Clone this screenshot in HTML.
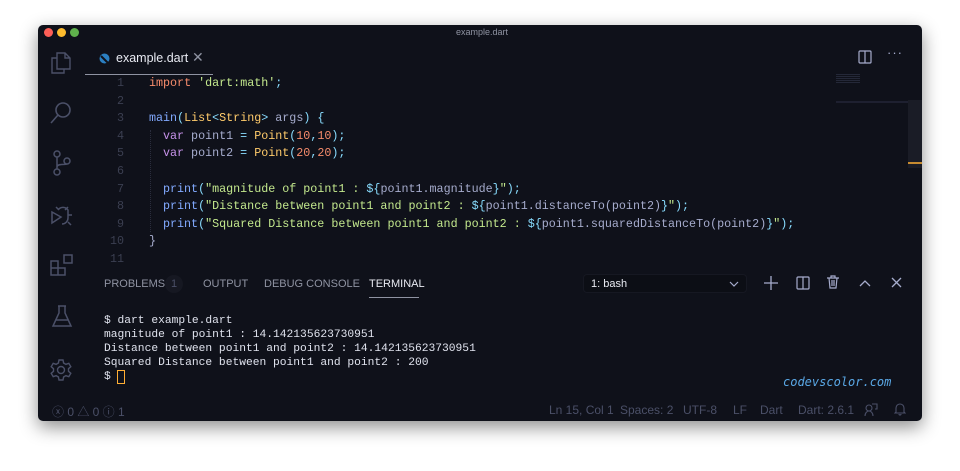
<!DOCTYPE html><html><head><style>
*{margin:0;padding:0;box-sizing:border-box}
body{width:960px;height:471px;background:#fff;position:relative;overflow:hidden;font-family:"Liberation Sans",sans-serif}
.win{position:absolute;left:38px;top:25px;width:884px;height:396px;background:#0f111a;border-radius:5px;box-shadow:0 6px 18px rgba(0,0,0,.45);overflow:hidden}
.a{position:absolute;white-space:pre}
.code{font-family:"Liberation Mono",monospace;font-size:11.7px;color:#a6accd}
.ln{position:absolute;left:60px;width:26px;text-align:right;color:#3b3f51;font-family:"Liberation Mono",monospace;font-size:11.7px}
.k{color:#f78c6c}.s{color:#c3e88d}.f{color:#82aaff}.t{color:#ffcb6b}.v{color:#c792ea}.o{color:#89ddff}
.term{font-family:"Liberation Mono",monospace;font-size:11.27px;color:#e0e3ee}
.tab{font-size:11px;color:#8f93a2;position:absolute;top:253px}
.st{position:absolute;top:378px;font-size:12px;color:#4b5068}
svg{position:absolute}
</style></head><body>
<div class="win">
<div style="position:absolute;left:6px;top:3px;width:9px;height:9px;border-radius:50%;background:#fe5f57"></div>
<div style="position:absolute;left:19px;top:3px;width:9px;height:9px;border-radius:50%;background:#febc2e"></div>
<div style="position:absolute;left:32px;top:3px;width:9px;height:9px;border-radius:50%;background:#5fb14c"></div>
<div class="a" style="left:418px;top:2px;font-size:9px;color:#8f93a2">example.dart</div>
<svg style="left:12px;top:25px" width="22" height="26" viewBox="0 0 22 26" fill="none" stroke="#4b5068" stroke-width="1.4"><path d="M7 3h8l5 5v11H7z M15 3v5h5 M7 8H2v15h12v-4"/></svg>
<svg style="left:12px;top:76px" width="24" height="26" fill="none" stroke="#4b5068" stroke-width="1.6"><circle cx="13" cy="9" r="7"/><path d="M8 14L1 22"/></svg>
<svg style="left:13px;top:124px" width="22" height="28" fill="none" stroke="#4b5068" stroke-width="1.5"><circle cx="6" cy="5" r="3"/><circle cx="6" cy="23" r="3"/><circle cx="16" cy="12" r="3"/><path d="M6 8v12 M6 18c0-4 10-2 10-3"/></svg>
<svg style="left:10px;top:178px" width="26" height="26" fill="none" stroke="#4b5068" stroke-width="1.5"><path d="M4 9l9 5-9 6z"/><path d="M10 7a6 6 0 0 1 10 0v8a6 6 0 0 1-6 6 M8 4l3 3 M20 4l-3 3 M20 12h4 M20 19l3 3"/></svg>
<svg style="left:12px;top:229px" width="24" height="24" fill="none" stroke="#4b5068" stroke-width="1.5"><path d="M1 7h7v14H1z M1 14h14v7H8 M14 1h8v8h-8z"/></svg>
<svg style="left:13px;top:280px" width="22" height="24" fill="none" stroke="#4b5068" stroke-width="1.5"><path d="M7 1h8 M8 1v7L2 21h18L14 8V1 M5 15h12"/></svg>
<svg style="left:11px;top:333px" width="24" height="24" viewBox="0 0 24 24" fill="none" stroke="#4b5068" stroke-width="1.4"><circle cx="12" cy="12" r="3.5"/><path d="M10 2h4l.6 3 2.3 1.3 2.9-1 2 3.4-2.3 2v2.6l2.3 2-2 3.4-2.9-1-2.3 1.3L14 22h-4l-.6-3-2.3-1.3-2.9 1-2-3.4 2.3-2v-2.6l-2.3-2 2-3.4 2.9 1L9.4 5z"/></svg>
<svg style="left:61px;top:28px" width="11" height="11"><circle cx="5.5" cy="5.5" r="5" fill="#2b7fc1"/><path d="M2 3l7 7" stroke="#0f111a" stroke-width="2"/></svg>
<div class="a" style="left:78px;top:26px;font-size:12.5px;color:#e8eaf2">example.dart</div>
<div class="a" style="left:154px;top:24px;font-size:14px;color:#8f93a2">✕</div>
<div style="position:absolute;left:47px;top:49px;width:128px;height:1px;background:#8f93a2"></div>
<svg style="left:820px;top:25px" width="14" height="14" fill="none" stroke="#a6accd" stroke-width="1.2"><rect x="1" y="1" width="12" height="12" rx="1"/><path d="M7 1v12"/></svg>
<div class="a" style="left:849px;top:20px;font-size:13px;color:#a6accd;letter-spacing:1px">···</div>
<div style="position:absolute;left:870px;top:75px;width:14px;height:68px;background:#1a1c26"></div>
<div style="position:absolute;left:798px;top:76px;width:72px;height:2px;background:#1e2030"></div>
<div style="position:absolute;left:870px;top:137px;width:14px;height:2px;background:#c78b30"></div>
<div style="position:absolute;left:798px;top:49px;width:24px;height:10px;opacity:.5;background:repeating-linear-gradient(#3a3f55 0 1px,transparent 1px 2px)"></div>
<div class="ln" style="top:51px">1</div><div class="ln" style="top:68.6px">2</div><div class="ln" style="top:86.2px">3</div><div class="ln" style="top:103.8px">4</div><div class="ln" style="top:121.4px">5</div><div class="ln" style="top:139px">6</div><div class="ln" style="top:156.6px">7</div><div class="ln" style="top:174.2px">8</div><div class="ln" style="top:191.8px">9</div><div class="ln" style="top:209.4px">10</div><div class="ln" style="top:227px">11</div>
<div style="position:absolute;left:112px;top:105px;width:1px;height:102px;border-left:1px dotted #2a2d3d"></div>
<div class="a code" style="left:111px;top:51px"><span class="k">import</span> <span class="s">'dart:math'</span><span class="o">;</span></div>
<div class="a code" style="left:111px;top:86.2px"><span class="f">main</span><span class="o">(</span><span class="t">List</span><span class="o">&lt;</span><span class="t">String</span><span class="o">&gt;</span> args<span class="o">)</span> <span class="o">{</span></div>
<div class="a code" style="left:125px;top:103.8px"><span class="v">var</span> point1 <span class="o">=</span> <span class="t">Point</span><span class="o">(</span><span class="k">10</span><span class="o">,</span><span class="k">10</span><span class="o">);</span></div>
<div class="a code" style="left:125px;top:121.4px"><span class="v">var</span> point2 <span class="o">=</span> <span class="t">Point</span><span class="o">(</span><span class="k">20</span><span class="o">,</span><span class="k">20</span><span class="o">);</span></div>
<div class="a code" style="left:125px;top:156.6px"><span class="f">print</span><span class="o">(</span><span class="s">"magnitude of point1 : </span><span class="o">${</span>point1.magnitude<span class="o">}</span><span class="s">"</span><span class="o">);</span></div>
<div class="a code" style="left:125px;top:174.2px"><span class="f">print</span><span class="o">(</span><span class="s">"Distance between point1 and point2 : </span><span class="o">${</span>point1.distanceTo(point2)<span class="o">}</span><span class="s">"</span><span class="o">);</span></div>
<div class="a code" style="left:125px;top:191.8px"><span class="f">print</span><span class="o">(</span><span class="s">"Squared Distance between point1 and point2 : </span><span class="o">${</span>point1.squaredDistanceTo(point2)<span class="o">}</span><span class="s">"</span><span class="o">);</span></div>
<div class="a code" style="left:111px;top:209.4px">}</div>
<div class="tab" style="left:66px">PROBLEMS</div>
<div style="position:absolute;left:127px;top:250px;width:18px;height:18px;border-radius:9px;background:#161822"></div>
<div class="tab" style="left:133px;color:#4b5068">1</div>
<div class="tab" style="left:165px">OUTPUT</div>
<div class="tab" style="left:226px">DEBUG CONSOLE</div>
<div class="tab" style="left:331px;color:#e8eaf2">TERMINAL</div>
<div style="position:absolute;left:331px;top:272px;width:50px;height:1px;background:#8f93a2"></div>
<div style="position:absolute;left:545px;top:249px;width:164px;height:19px;border-radius:4px;background:#0c0e15;border:1px solid #161822"></div>
<div class="a" style="left:553px;top:253px;font-size:11px;color:#e8eaf2">1: bash</div>
<svg style="left:691px;top:256px" width="10" height="7" fill="none" stroke="#a6accd" stroke-width="1.2"><path d="M1 1l4 4 4-4"/></svg>
<svg style="left:726px;top:251px" width="14" height="14" stroke="#a6accd" stroke-width="1.3"><path d="M7 0v14M0 7h14"/></svg>
<svg style="left:758px;top:251px" width="14" height="14" fill="none" stroke="#a6accd" stroke-width="1.2"><rect x="1" y="1" width="12" height="12" rx="1"/><path d="M7 1v12"/></svg>
<svg style="left:789px;top:250px" width="12" height="14" fill="none" stroke="#a6accd" stroke-width="1.2"><path d="M0 3h12M4 3V1h4v2M2 3l1 10h6l1-10M5 5v6M7 5v6"/></svg>
<svg style="left:821px;top:254px" width="12" height="8" fill="none" stroke="#a6accd" stroke-width="1.3"><path d="M1 7l5-5 5 5"/></svg>
<svg style="left:853px;top:252px" width="11" height="11" stroke="#a6accd" stroke-width="1.3"><path d="M1 1l9 9M10 1l-9 9"/></svg>
<div class="a term" style="left:66px;top:289px;line-height:14px">$ dart example.dart
magnitude of point1 : 14.142135623730951
Distance between point1 and point2 : 14.142135623730951
Squared Distance between point1 and point2 : 200
$ </div>
<div style="position:absolute;left:79px;top:345px;width:8px;height:14px;border:1.5px solid #ffae34"></div>
<div class="a" style="left:745px;top:350px;font-family:'DejaVu Sans Mono',monospace;font-size:12px;color:#5aa8e6;font-style:italic">codevscolor.com</div>
<div class="st" style="left:14px">ⓧ 0 △ 0 ⓘ 1</div>
<div class="st" style="left:511px">Ln 15, Col 1</div>
<div class="st" style="left:582px">Spaces: 2</div>
<div class="st" style="left:645px">UTF-8</div>
<div class="st" style="left:695px">LF</div>
<div class="st" style="left:722px">Dart</div>
<div class="st" style="left:760px">Dart: 2.6.1</div>
<svg style="left:826px;top:378px" width="14" height="14" fill="none" stroke="#4b5068" stroke-width="1.1"><circle cx="5" cy="5" r="3"/><path d="M1 13c0-3 2-5 4-5s4 2 4 5M8 1h5v5h-2"/></svg>
<svg style="left:856px;top:377px" width="12" height="14" fill="none" stroke="#4b5068" stroke-width="1.1"><path d="M2 10V6a4 4 0 0 1 8 0v4l1 1H1zM5 12a1 1 0 0 0 2 0"/></svg>
</div>
</body></html>
